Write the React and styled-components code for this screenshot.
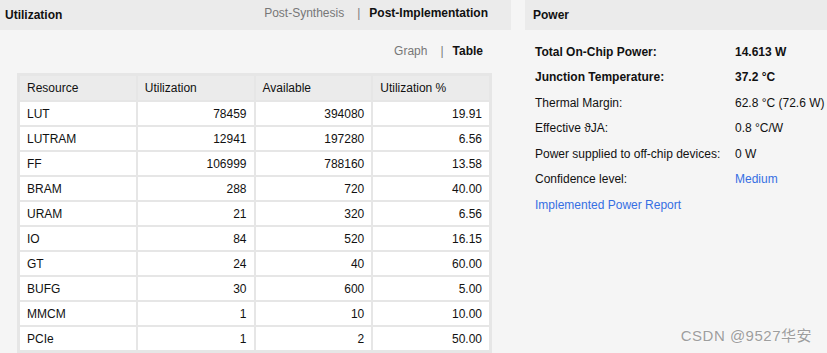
import React from 'react'
import styled, { createGlobalStyle } from 'styled-components'

const GlobalStyle = createGlobalStyle`
  html, body {
    margin: 0;
    padding: 0;
    background: #f5f5f5;
  }
  body {
    font-family: "Liberation Sans", Arial, sans-serif;
    font-size: 12px;
    color: #1b1b1b;
  }
`

const rows = [
  ['LUT', '78459', '394080', '19.91'],
  ['LUTRAM', '12941', '197280', '6.56'],
  ['FF', '106999', '788160', '13.58'],
  ['BRAM', '288', '720', '40.00'],
  ['URAM', '21', '320', '6.56'],
  ['IO', '84', '520', '16.15'],
  ['GT', '24', '40', '60.00'],
  ['BUFG', '30', '600', '5.00'],
  ['MMCM', '1', '10', '10.00'],
  ['PCIe', '1', '2', '50.00'],
]

const power = [
  { label: 'Total On-Chip Power:', value: '14.613 W', bold: true },
  { label: 'Junction Temperature:', value: '37.2 °C', bold: true },
  { label: 'Thermal Margin:', value: '62.8 °C (72.6 W)' },
  { label: 'Effective \u03D1JA:', value: '0.8 °C/W' },
  { label: 'Power supplied to off-chip devices:', value: '0 W' },
  { label: 'Confidence level:', value: 'Medium', link: true },
]

function App() {
  return (
    <>
      <GlobalStyle />
      <Page>
        <UtilPanel>
          <Header>
            <Title>Utilization</Title>
            <Tabs>
              <Tab>Post-Synthesis</Tab>
              <Sep>|</Sep>
              <Tab active>Post-Implementation</Tab>
            </Tabs>
          </Header>
          <ViewToggle>
            <Tab>Graph</Tab>
            <Sep>|</Sep>
            <Tab active>Table</Tab>
          </ViewToggle>
          <TableFrame>
            <Table>
              <thead>
                <tr>
                  <Th>Resource</Th>
                  <Th>Utilization</Th>
                  <Th>Available</Th>
                  <Th>Utilization %</Th>
                </tr>
              </thead>
              <tbody>
                {rows.map(r => (
                  <tr key={r[0]}>
                    <Td>{r[0]}</Td>
                    <Td num>{r[1]}</Td>
                    <Td num>{r[2]}</Td>
                    <Td num>{r[3]}</Td>
                  </tr>
                ))}
              </tbody>
            </Table>
          </TableFrame>
        </UtilPanel>

        <PowerPanel>
          <Header>
            <Title>Power</Title>
          </Header>
          <PowerList>
            {power.map(p => (
              <PowerRow key={p.label}>
                <Label bold={p.bold}>{p.label}</Label>
                {p.link ? <Link>{p.value}</Link> : <Value bold={p.bold}>{p.value}</Value>}
              </PowerRow>
            ))}
            <PowerRow>
              <Link>Implemented Power Report</Link>
            </PowerRow>
          </PowerList>
        </PowerPanel>
      </Page>
      <Watermark>CSDN @9527华安</Watermark>
    </>
  )
}

export default App

const Page = styled.div`
  display: flex;
  gap: 14px;
  width: 827px;
  height: 353px;
  overflow: hidden;
`

const UtilPanel = styled.div`
  width: 511px;
  flex: none;
`

const PowerPanel = styled.div`
  flex: 1;
`

const Header = styled.div`
  height: 30px;
  background: #ebebeb;
  display: flex;
  align-items: center;
  justify-content: space-between;
  padding: 0 23px 0 5px;
  box-sizing: border-box;
  ${PowerPanel} & {
    padding-left: 8px;
  }
`

const Title = styled.div`
  font-weight: bold;
  color: #111;
`

const Tabs = styled.div`
  display: flex;
  align-items: center;
  padding-bottom: 4px;
`

const Tab = styled.span`
  color: ${p => (p.active ? '#111' : '#777')};
  font-weight: ${p => (p.active ? 'bold' : 'normal')};
`

const Sep = styled.span`
  color: #7a7a7a;
  margin: 0 9px 0 13px;
`

const ViewToggle = styled.div`
  display: flex;
  justify-content: flex-end;
  align-items: center;
  height: 20px;
  margin-top: 11px;
  padding-right: 28px;
`

const TableFrame = styled.div`
  margin: 12px 19px 0 17px;
  background: #e6e6e6;
  padding: 1px;
`

const Table = styled.table`
  width: 100%;
  table-layout: fixed;
  border-collapse: separate;
  border-spacing: 2px;
`

const Th = styled.th`
  background: #ebebeb;
  height: 24px;
  padding: 0 7px;
  text-align: left;
  font-weight: normal;
  color: #111;
`

const Td = styled.td`
  background: #fff;
  height: 23px;
  padding: 0 7px;
  text-align: ${p => (p.num ? 'right' : 'left')};
  color: #111;
`

const PowerList = styled.div`
  padding: 9px 0 0 10px;
`

const PowerRow = styled.div`
  display: grid;
  grid-template-columns: 200px 1fr;
  align-items: center;
  height: 25.5px;
  white-space: nowrap;
`

const Label = styled.span`
  font-weight: ${p => (p.bold ? 'bold' : 'normal')};
  color: #111;
`

const Value = styled.span`
  font-weight: ${p => (p.bold ? 'bold' : 'normal')};
  color: #111;
`

const Link = styled.span`
  color: #356fe3;
  cursor: pointer;
`

const Watermark = styled.div`
  position: absolute;
  right: 15px;
  top: 324px;
  font-family: "Liberation Sans", "Noto Sans CJK SC", sans-serif;
  font-size: 15px;
  letter-spacing: 0.5px;
  color: #9e9e9e;
  text-shadow: 0 0 2px #fff;
`
